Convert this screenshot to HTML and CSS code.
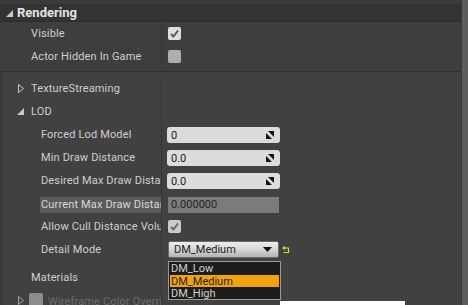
FILE: index.html
```
<!DOCTYPE html>
<html>
<head>
<meta charset="utf-8">
<link rel="stylesheet" href="styles.css">
</head>
<body>
<div class="panel">
  <div class="topstrip"></div>
  <div class="cat-header">
    <svg class="tri" width="7" height="7" viewBox="0 0 7 7"><polygon points="7,0 7,7 0,7" fill="#c8c8c8"/></svg>
    <span>Rendering</span>
  </div>
  <div class="cat-body">
    <div class="row">
      <div class="name l1"><span class="label">Visible</span></div>
      <div class="value"><span class="check on"><svg width="13" height="13" viewBox="0 0 13 13"><path d="M3 7 L5.5 9.5 L10 3.5" fill="none" stroke="#5a5a5a" stroke-width="2"/></svg></span></div>
    </div>
    <div class="row">
      <div class="name l1"><span class="label">Actor Hidden In Game</span></div>
      <div class="value"><span class="check off"></span></div>
    </div>
  </div>
  <div class="group">
    <div class="row">
      <div class="name l1t"><svg class="tri-r" width="6" height="9" viewBox="0 0 6 9"><polygon points="0.5,0.5 5.5,4.5 0.5,8.5" fill="none" stroke="#c8c8c8" stroke-width="1"/></svg><span class="label">TextureStreaming</span></div>
      <div class="value"></div>
    </div>
    <div class="row">
      <div class="name l1t"><svg class="tri-d" width="7" height="7" viewBox="0 0 7 7"><polygon points="7,0 7,7 0,7" fill="#c8c8c8"/></svg><span class="label">LOD</span></div>
      <div class="value"></div>
    </div>
    <div class="row">
      <div class="name l2"><span class="label">Forced Lod Model</span></div>
      <div class="value"><div class="numbox"><span>0</span><svg class="spin" width="8" height="8" viewBox="0 0 8 8"><polygon points="2,0 8,0 8,6" fill="#111"/><polygon points="0,2 0,8 6,8" fill="#111"/></svg></div></div>
    </div>
    <div class="row">
      <div class="name l2"><span class="label">Min Draw Distance</span></div>
      <div class="value"><div class="numbox"><span>0.0</span><svg class="spin" width="8" height="8" viewBox="0 0 8 8"><polygon points="2,0 8,0 8,6" fill="#111"/><polygon points="0,2 0,8 6,8" fill="#111"/></svg></div></div>
    </div>
    <div class="row">
      <div class="name l2"><span class="label">Desired Max Draw Distance</span></div>
      <div class="value"><div class="numbox"><span>0.0</span><svg class="spin" width="8" height="8" viewBox="0 0 8 8"><polygon points="2,0 8,0 8,6" fill="#111"/><polygon points="0,2 0,8 6,8" fill="#111"/></svg></div></div>
    </div>
    <div class="row">
      <div class="name l2"><span class="label hl">Current Max Draw Distance</span></div>
      <div class="value"><div class="robox">0.000000</div></div>
    </div>
    <div class="row">
      <div class="name l2"><span class="label">Allow Cull Distance Volume</span></div>
      <div class="value"><span class="check on dim"><svg width="13" height="13" viewBox="0 0 13 13"><path d="M3 7 L5.5 9.5 L10 3.5" fill="none" stroke="#666" stroke-width="2"/></svg></span></div>
    </div>
    <div class="row">
      <div class="name l2"><span class="label">Detail Mode</span></div>
      <div class="value">
        <div class="combo"><span>DM_Medium</span><svg width="9" height="5" viewBox="0 0 9 5"><polygon points="0,0 9,0 4.5,5" fill="#111"/></svg></div>
        <svg class="reset" width="8" height="8" viewBox="0 0 8 8"><path d="M3 0.5 L1 2 L3 3.5 M1 2 H6.5 V6.5 H1.5" fill="none" stroke="#d4dc3c" stroke-width="1.2"/></svg>
      </div>
    </div>
    <div class="row mat">
      <div class="name l1"><span class="label">Materials</span></div>
      <div class="value"></div>
    </div>
    <div class="row wire">
      <div class="name l1t"><svg class="tri-r" width="6" height="9" viewBox="0 0 6 9"><polygon points="0.5,0.5 5.5,4.5 0.5,8.5" fill="none" stroke="#a0a0a0" stroke-width="1"/></svg><span class="gbox"></span><span class="label faded">Wireframe Color Override</span></div>
      <div class="value"><div class="swatch"></div></div>
    </div>
  </div>
  <div class="scroll"></div>
  <div class="dropdown">
    <div class="item">DM_Low</div>
    <div class="item sel">DM_Medium</div>
    <div class="item">DM_High</div>
  </div>
</div>
</body>
</html>
```
FILE: styles.css
```
html, body {
  margin: 0;
  padding: 0;
  background: #414141;
}
.panel {
  position: relative;
  width: 468px;
  height: 305px;
  overflow: hidden;
  background: #414141;
  font-family: Roboto, "Liberation Sans", sans-serif;
  font-size: 11px;
  color: #cfcfcf;
  box-shadow: inset 3px 0 0 #393939;
}
.topstrip {
  height: 4px;
  background: #3b3b3b;
}
.cat-header {
  height: 17px;
  background: #333333;
  border-bottom: 1px solid #2b2b2b;
  display: flex;
  align-items: center;
  padding-left: 6px;
  font-weight: bold;
  font-size: 13px;
  color: #e4e4e4;
}
.cat-header .tri {
  margin-right: 4px;
  margin-top: 1px;
  flex: none;
}
.cat-body {
  background: #3e3e3e;
  padding-bottom: 3px;
  border-bottom: 1px solid #2e2e2e;
  margin-bottom: 5px;
}
.row {
  height: 23px;
  display: grid;
  grid-template-columns: 162px 1fr;
}
.name {
  display: flex;
  align-items: center;
  border-right: 1px solid #353535;
  overflow: hidden;
  white-space: nowrap;
}
.name svg { flex: none; }
.l1 { padding-left: 31px; }
.l1t { padding-left: 17px; }
.l2 { padding-left: 40px; }
.l2 .label { padding-left: 1px; }
.label {
  letter-spacing: 0.15px;
}
.label.hl {
  flex: 1;
  background: #5b5b5b;
  height: 16px;
  line-height: 16px;
  margin-top: 3px;
  color: #d8d8d8;
}
.tri-r { margin-right: 7px; margin-left: 1px; }
.tri-d { margin-right: 7px; }
.value {
  display: flex;
  align-items: center;
  padding-left: 6px;
}
.check {
  width: 13px;
  height: 13px;
  border-radius: 2px;
  display: block;
}
.check.on { background: #dedede; }
.check.on.dim { background: #cacaca; }
.check.off { background: #aeaeae; }
.check svg { display: block; }
.numbox {
  margin-left: -1px;
  width: 113px;
  height: 16px;
  background: #dcdcdc;
  border-radius: 3px;
  display: flex;
  align-items: center;
  justify-content: space-between;
  padding: 0 6px 0 4px;
  box-sizing: border-box;
  color: #1a1a1a;
  margin-top: 1px;
}
.spin { display: block; }
.robox {
  width: 111px;
  height: 16px;
  margin-top: 3px;
  background: #7b7b7b;
  color: #262626;
  padding-left: 3px;
  box-sizing: border-box;
  line-height: 16px;
}
.combo {
  width: 111px;
  height: 17px;
  margin-top: -1px;
  box-sizing: border-box;
  border: 1px solid #6a6a6a;
  border-radius: 2px;
  background: linear-gradient(#ececec, #dadada 45%, #b2b2b2);
  display: flex;
  align-items: center;
  justify-content: space-between;
  padding: 0 6px 0 5px;
  color: #1c1c1c;
}
.combo svg { display: block; margin-top: 1px; }
.reset {
  display: block;
  margin-left: 3px;
  margin-top: 1px;
}
.row.mat {
  margin-top: 5px;
}
.row.wire .name {
  align-items: flex-start;
  padding-top: 6px;
  box-sizing: border-box;
}
.row.wire .tri-r { margin-top: 1px; }
.gbox {
  flex: none;
  width: 14px;
  height: 13px;
  background: #8c8c8c;
  border-radius: 2px;
  margin: -2px 5px 0 -2px;
}
.faded {
  color: #6c6c6c;
  margin-top: 0px;
}
.swatch {
  width: 125px;
  height: 12px;
  background: #ffffff;
  margin-left: 112px;
  margin-top: 12px;
}
.scroll {
  position: absolute;
  right: 0;
  top: 0;
  width: 6px;
  height: 305px;
  background: #5c5c5c;
  box-shadow: -1px 0 0 #383838;
}
.dropdown {
  position: absolute;
  left: 168px;
  top: 261px;
  width: 113px;
  height: 39px;
  box-sizing: border-box;
  border: 1px solid #9a9a9a;
  background: #1d1d1d;
  padding: 0 1px;
}
.item {
  height: 12.5px;
  line-height: 13px;
  padding-left: 1px;
  color: #d2d2d2;
  font-size: 11px;
}
.item.sel {
  background: #f0a30a;
  color: #1e1e1e;
}
```
